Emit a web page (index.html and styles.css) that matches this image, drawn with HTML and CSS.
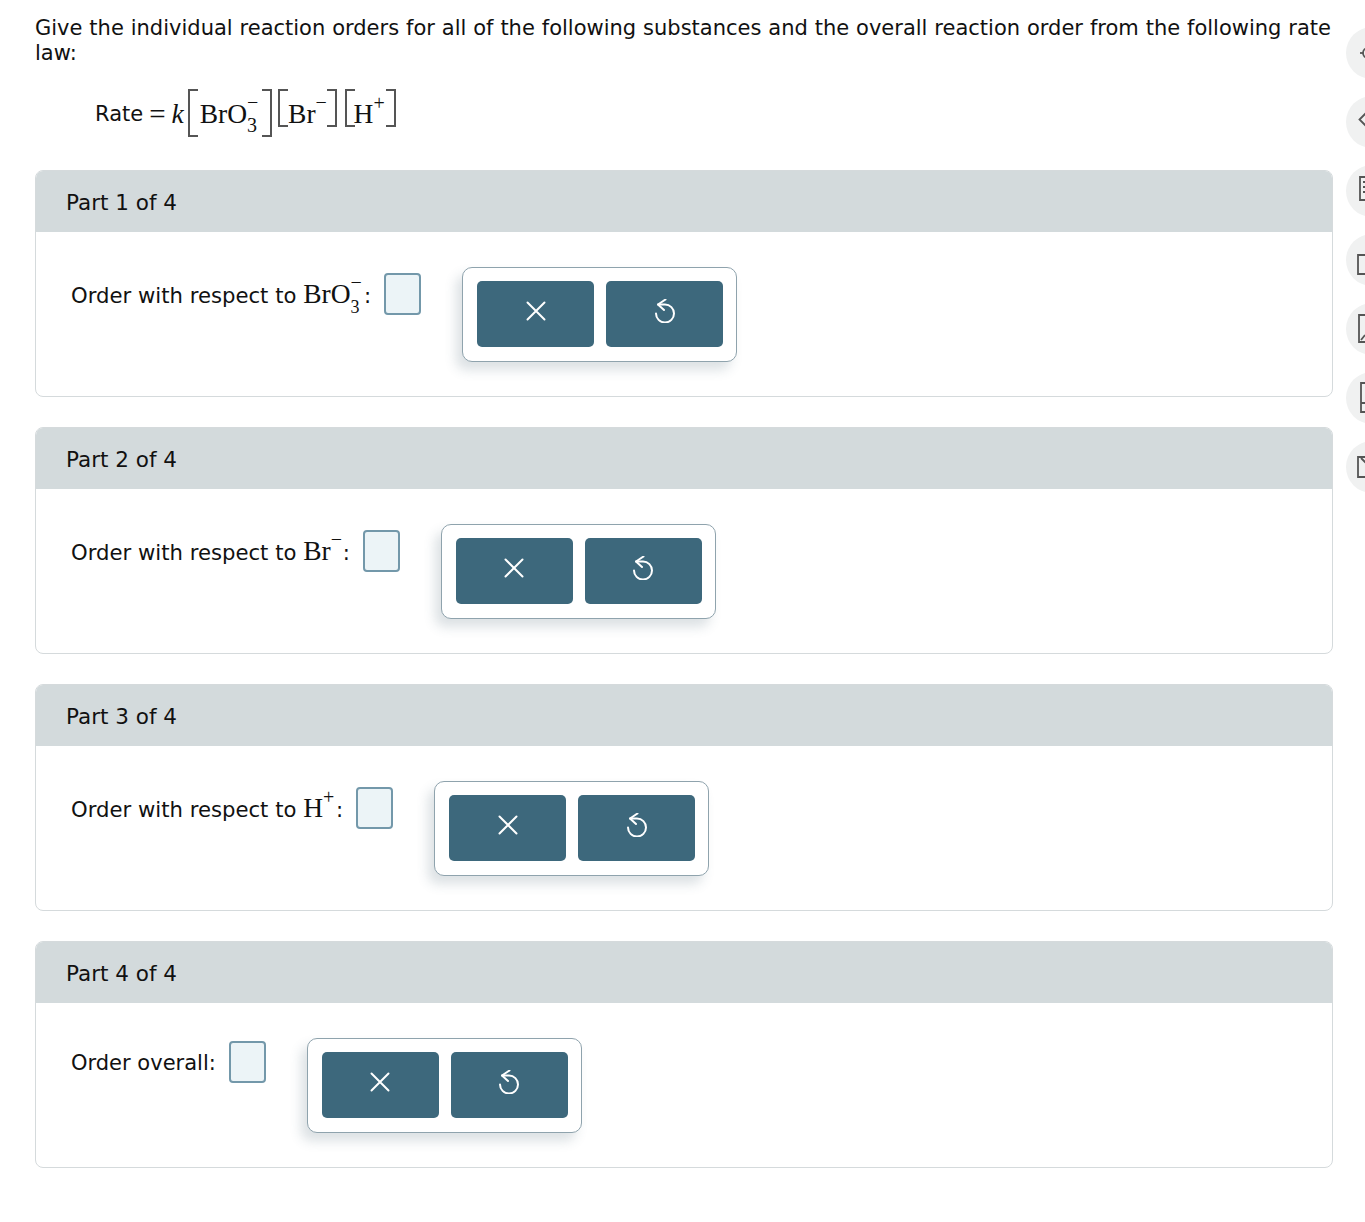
FILE: index.html
```html
<!DOCTYPE html>
<html lang="en">
<head>
    <meta charset="UTF-8">
    <title>Reaction Orders</title>
    <link rel="stylesheet" href="styles.css">
</head>
<body>

<div class="side-tools">
    <div class="tool"><svg viewBox="0 0 20 20"><circle cx="14" cy="13" r="5"/><path d="M9 13H6"/></svg></div>
    <div class="tool"><svg viewBox="0 0 20 20"><path d="M12 4L5.500 10.500 12 17"/></svg></div>
    <div class="tool"><svg viewBox="0 0 20 20"><path d="M20-1H6v23h14M9 4h2M9 9h2M9 14h2"/></svg></div>
    <div class="tool"><svg viewBox="0 0 20 20"><path d="M20 8H4v19h16"/></svg></div>
    <div class="tool"><svg viewBox="0 0 20 20"><path d="M20-1H5v27h15M7 24l4-5"/></svg></div>
    <div class="tool"><svg viewBox="0 0 20 20"><path d="M20-2H7v29h13M7 18h13"/></svg></div>
    <div class="tool"><svg viewBox="0 0 20 20"><path d="M20 3H4v20h16M7 4l6 6"/></svg></div>
</div>

<div class="question">
    <p class="prompt">Give the individual reaction orders for all of the following substances and the overall reaction order from the following rate law:</p>

    <div class="rate-law">
        <span class="rate-word">Rate</span>
        <span class="math eq">=</span>
        <span class="math var">k</span>
        <span class="bracket bro"><span class="math">BrO</span><span class="ion"><sup>&minus;</sup><sub>3</sub></span></span>
        <span class="bracket br"><span class="math">Br</span><span class="ion"><sup>&minus;</sup></span></span>
        <span class="bracket hyd"><span class="math">H</span><span class="ion"><sup class="plus">+</sup></span></span>
    </div>

    <section class="part">
        <h2>Part 1 of 4</h2>
        <div class="part-body">
            <div class="answer-row">
                <span class="label">Order with respect to <span class="math species">BrO</span><span class="ion small first"><sup>&minus;</sup><sub>3</sub></span>:</span>
                <input class="answer" type="text">
            </div>
            <div class="action-box">
                <button class="action"><svg viewBox="0 0 24 24"><path d="M3.500 3.500l17 17M20.500 3.500l-17 17"/></svg></button>
                <button class="action"><svg viewBox="0 0 24 24"><path d="M12.500 .5L5 5.500l6 5.500"/><path d="M5 5.500h7a9 9 0 1 1-9 9"/></svg></button>
            </div>
        </div>
    </section>

    <section class="part">
        <h2>Part 2 of 4</h2>
        <div class="part-body">
            <div class="answer-row">
                <span class="label">Order with respect to <span class="math species">Br</span><span class="ion small second"><sup>&minus;</sup></span>:</span>
                <input class="answer" type="text">
            </div>
            <div class="action-box">
                <button class="action"><svg viewBox="0 0 24 24"><path d="M3.500 3.500l17 17M20.500 3.500l-17 17"/></svg></button>
                <button class="action"><svg viewBox="0 0 24 24"><path d="M12.500 .5L5 5.500l6 5.500"/><path d="M5 5.500h7a9 9 0 1 1-9 9"/></svg></button>
            </div>
        </div>
    </section>

    <section class="part">
        <h2>Part 3 of 4</h2>
        <div class="part-body">
            <div class="answer-row">
                <span class="label">Order with respect to <span class="math species">H</span><span class="ion small narrow"><sup class="plus">+</sup></span>:</span>
                <input class="answer" type="text">
            </div>
            <div class="action-box">
                <button class="action"><svg viewBox="0 0 24 24"><path d="M3.500 3.500l17 17M20.500 3.500l-17 17"/></svg></button>
                <button class="action"><svg viewBox="0 0 24 24"><path d="M12.500 .5L5 5.500l6 5.500"/><path d="M5 5.500h7a9 9 0 1 1-9 9"/></svg></button>
            </div>
        </div>
    </section>

    <section class="part">
        <h2>Part 4 of 4</h2>
        <div class="part-body">
            <div class="answer-row overall">
                <span class="label">Order overall:</span>
                <input class="answer" type="text">
            </div>
            <div class="action-box">
                <button class="action"><svg viewBox="0 0 24 24"><path d="M3.500 3.500l17 17M20.500 3.500l-17 17"/></svg></button>
                <button class="action"><svg viewBox="0 0 24 24"><path d="M12.500 .5L5 5.500l6 5.500"/><path d="M5 5.500h7a9 9 0 1 1-9 9"/></svg></button>
            </div>
        </div>
    </section>
</div>

</body>
</html>
```

FILE: styles.css
```css
html, body {
    margin: 0;
    padding: 0;
    overflow: hidden;
}

body {
    font-family: 'DejaVu Sans', Verdana, sans-serif;
    font-size: 21px;
    color: #111;
    background: white;
    height: 1222px;
}

.question {
    width: 1298px;
    margin-left: 35px;
    padding-top: 16px;
}

.prompt {
    margin: 0;
    width: 1296px;
    line-height: 25px;
    text-align: justify;
}

.math {
    font-family: 'Liberation Serif', 'Times New Roman', serif;
}

.rate-law {
    display: flex;
    align-items: flex-start;
    height: 48px;
    margin: 23px 0 33px 60px;
    line-height: 50px;
}

.rate-law .math {
    font-size: 27.500px;
}

.rate-word {
    margin-right: 6px;
}

.rate-law .eq {
    margin-right: 6px;
    font-size: 29px;
}

.rate-law .var {
    font-style: italic;
}

/* the square brackets are the two end pieces, the ticks come from the borders */
.bracket {
    position: relative;
    display: flex;
    height: 38px;
}

.bracket::before, .bracket::after {
    content: "";
    position: absolute;
    top: 0;
    bottom: 0;
    width: 8px;
    border: 2px solid #555;
}

.bracket::before {
    left: 0;
    border-right: none;
}

.bracket::after {
    right: 0;
    border-left: none;
}

.bracket.bro {
    height: 48px;
    margin-left: 4px;
    padding: 0 12px 0 12px;
}

.bracket.br {
    margin-left: 6px;
    padding: 0 8px 0 10px;
}

.bracket.hyd {
    margin-left: 8px;
    padding: 0 10px 0 9px;
}

.ion {
    position: relative;
    display: inline-block;
    width: 13px;
    font-family: 'Liberation Serif', serif;
    font-size: 20px;
}

.ion sup, .ion sub {
    position: absolute;
    left: 0;
    line-height: 1;
    font-size: inherit;
}

.ion sup {
    top: 3px;
}

.ion sup.plus {
    top: 4px;
}

.ion sub {
    top: 26px;
}

.part {
    margin-bottom: 30px;
    border: 1px solid #d5dadc;
    border-radius: 8px;
    height: 227px;
    box-sizing: border-box;
    overflow: hidden;
}

.part h2 {
    margin: 0;
    height: 61px;
    padding-left: 30px;
    background: #d3dadc;
    font-size: 21.500px;
    font-weight: normal;
    line-height: 63px;
}

.part-body {
    display: flex;
    align-items: flex-start;
    padding: 35px 0 0 35px;
}

.answer-row {
    display: flex;
    align-items: center;
    margin-top: 6px;
}

.answer-row.overall {
    margin-top: 3px;
}

.label {
    font-size: 21.200px;
    white-space: nowrap;
}

.overall .label {
    padding-top: 2px;
    font-size: 21px;
}

.species {
    font-size: 27.500px;
}

.ion.small {
    width: 14px;
    height: 0;
    vertical-align: baseline;
}

.ion.small.first {
    width: 13.500px;
}

.ion.small.second {
    width: 12px;
}

.ion.small.narrow {
    width: 13px;
}

.ion.small sup {
    top: -31px;
}

.ion.small sup.plus {
    top: -30px;
}

.ion.small sub {
    top: -5px;
    font-size: 18px;
}

.answer {
    width: 37px;
    height: 42px;
    box-sizing: border-box;
    margin-left: 13px;
    padding: 0;
    background: #ecf4f7;
    border: 2px solid #7398aa;
    border-radius: 4px;
}

.action-box {
    display: flex;
    gap: 12px;
    margin-left: 41px;
    padding: 13px 13px 14px 14px;
    background: white;
    border: 1px solid #8fa3ad;
    border-radius: 10px;
    box-shadow: -6px 8px 12px rgba(60, 90, 105, 0.18);
}

.action {
    display: flex;
    align-items: center;
    justify-content: center;
    width: 117px;
    height: 66px;
    padding: 0;
    background: #3d687c;
    border: none;
    border-radius: 5px;
}

.action svg {
    width: 24px;
    height: 24px;
    margin-bottom: 6px;
    fill: none;
    stroke: white;
    stroke-width: 2;
    stroke-linecap: round;
    stroke-linejoin: round;
}

.side-tools {
    position: absolute;
    top: 27px;
    left: 1346px;
    display: flex;
    flex-direction: column;
    gap: 17px;
}

.tool {
    width: 52px;
    height: 52px;
    border-radius: 50%;
    background: #f0f1f1;
}

.tool svg {
    display: block;
    width: 20px;
    height: 20px;
    margin: 13px 0 0 8px;
    overflow: visible;
    fill: none;
    stroke: #555;
    stroke-width: 1.800;
}
```
